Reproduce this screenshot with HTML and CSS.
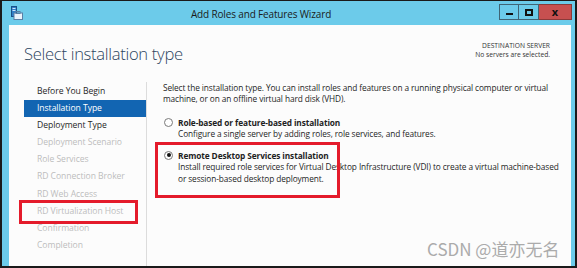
FILE: index.html
```html
<!DOCTYPE html>
<html>
<head>
<meta charset="utf-8">
<link rel="stylesheet" href="styles.css">
</head>
<body>
<div class="screen">
  <div class="window">
    <div class="titlebar">
      <svg class="appicon" width="12" height="14" viewBox="0 0 12 14">
        <rect x="0.5" y="0.5" width="5" height="10" fill="#2f7fc9" stroke="#1b4f86" stroke-width="1"/>
        <rect x="1.5" y="2" width="3" height="1" fill="#cfe6fa"/>
        <rect x="1.5" y="4" width="3" height="1" fill="#cfe6fa"/>
        <rect x="3" y="7" width="8.5" height="6.5" fill="#e8f2fb" stroke="#5a7fa5" stroke-width="1"/>
        <rect x="5" y="5.5" width="4" height="2" fill="none" stroke="#5a7fa5" stroke-width="1"/>
      </svg>
      <div class="title">Add Roles and Features Wizard</div>
      <div class="controls">
        <div class="btn min"><span class="bar"></span></div>
        <div class="btn max"><span class="box"></span></div>
        <div class="btn close">x</div>
      </div>
    </div>
    <div class="content">
      <div class="header">
        <h1 class="heading">Select installation type</h1>
        <div class="dest">
          <div>DESTINATION SERVER</div>
          <div>No servers are selected.</div>
        </div>
      </div>
      <div class="body">
        <ul class="nav">
          <li class="nav-item">Before You Begin</li>
          <li class="nav-item active">Installation Type</li>
          <li class="nav-item">Deployment Type</li>
          <li class="nav-item disabled">Deployment Scenario</li>
          <li class="nav-item disabled">Role Services</li>
          <li class="nav-item disabled">RD Connection Broker</li>
          <li class="nav-item disabled">RD Web Access</li>
          <li class="nav-item disabled">RD Virtualization Host</li>
          <li class="nav-item disabled">Confirmation</li>
          <li class="nav-item disabled">Completion</li>
        </ul>
        <div class="main">
          <p class="intro">Select the installation type. You can install roles and features on a running physical computer or virtual machine, or on an offline virtual hard disk (VHD).</p>
          <div class="option">
            <div class="option-row"><span class="radio"></span><span class="option-title">Role-based or feature-based installation</span></div>
            <div class="option-desc">Configure a single server by adding roles, role services, and features.</div>
          </div>
          <div class="option">
            <div class="option-row"><span class="radio checked"></span><span class="option-title">Remote Desktop Services installation</span></div>
            <div class="option-desc">Install required role services for Virtual Desktop Infrastructure (VDI) to create a virtual machine-based or session-based desktop deployment.</div>
          </div>
        </div>
      </div>
      <div class="mark mark-nav"></div>
      <div class="mark mark-option"></div>
      <div class="watermark">CSDN @道亦无名</div>
    </div>
  </div>
</div>
</body>
</html>
```
FILE: styles.css
```css
* { box-sizing: border-box; }
html, body { margin: 0; padding: 0; background: #111; }
body { width: 577px; height: 268px; overflow: hidden; }

.screen {
  width: 577px;
  height: 268px;
  background: #1a1a1a;
  padding: 1px 2px 2px 2px;
  font-family: "Open Sans", "Noto Sans", sans-serif;
}

.window {
  height: 100%;
  background: #6ccbea;
  display: flex;
  flex-direction: column;
  padding: 0 4px 0 7px;
}

.titlebar {
  height: 24px;
  display: flex;
  align-items: flex-start;
}
.appicon { margin: 5px 0 0 2px; flex: none; }
.title {
  flex: 1;
  margin-top: 6px;
  text-align: center;
  font-size: 10px;
  letter-spacing: -0.15px;
  color: #1b1b1b;
  padding-left: 0;
}
.controls {
  margin-top: 3px;
  margin-right: -1px;
  display: flex;
}
.btn {
  height: 16px;
  border: 1px solid #3f6475;
  display: flex;
  align-items: center;
  justify-content: center;
}
.btn.min { width: 20px; }
.btn.max { width: 20px; border-left: none; }
.btn.close {
  width: 33px;
  background: #c75050;
  border-color: #8a3a3a;
  border-left: none;
  font-weight: 700;
  font-size: 11px;
  color: #111;
  line-height: 1;
  padding-bottom: 2px;
}
.bar { width: 7px; height: 2px; background: #111; margin-top: 4px; }
.box { width: 8px; height: 7px; border: 2px solid #111; }

.content {
  flex: 1;
  background: #fcfcfc;
  position: relative;
  display: flex;
  flex-direction: column;
}

.header {
  display: flex;
  justify-content: space-between;
  align-items: flex-start;
  height: 57px;
}
.heading {
  margin: 17px 0 0 15px;
  font-size: 16.6px;
  font-weight: 300;
  color: #2c4560;
  letter-spacing: -0.3px;
}
.dest {
  margin: 16px 21px 0 0;
  text-align: right;
  font-size: 6.7px;
  line-height: 9px;
  color: #333;
}

.body {
  flex: 1;
  display: flex;
}
.nav {
  list-style: none;
  margin: 0 0 0 15px;
  padding: 1px 0 0 0;
  width: 123px;
  border-right: 1px solid #dcdcdc;
}
.nav-item {
  height: 17.1px;
  line-height: 17px;
  padding-left: 13px;
  font-size: 8.6px;
  letter-spacing: -0.05px;
  color: #262626;
  white-space: nowrap;
}
.nav-item.active { background: #1265b2; color: #fff; }
.nav-item.disabled { color: #bdbdbd; }

.main {
  flex: 1;
  padding: 0 0 0 16px;
  font-size: 8.3px;
  letter-spacing: -0.1px;
  color: #1e1e1e;
}
.intro {
  margin: 0;
  line-height: 11px;
  width: 400px;
}
.option { margin-top: 12px; }
.option + .option { margin-top: 9px; }
.option-row {
  display: flex;
  align-items: center;
  height: 12px;
}
.radio {
  width: 9px; height: 9px;
  border: 1px solid #7a7a7a;
  border-radius: 50%;
  background: #fff;
  margin: 0 5px 0 1px;
  position: relative;
  flex: none;
}
.radio.checked::after {
  content: "";
  position: absolute;
  left: 1.5px; top: 1.5px;
  width: 4px; height: 4px;
  border-radius: 50%;
  background: #111;
}
.option-title { font-weight: 700; }
.option-desc {
  padding-left: 15px;
  line-height: 12px;
  width: 400px;
}

.mark {
  position: absolute;
  border: 3px solid #e41b2b;
}
.mark-nav { left: 10px; top: 175px; width: 119px; height: 24px; }
.mark-option { left: 146px; top: 117px; width: 185px; height: 56px; }

.watermark {
  position: absolute;
  left: 418px;
  top: 211px;
  font-family: "Noto Sans CJK SC", sans-serif;
  font-size: 17px;
  line-height: 25px;
  color: #ababab;
  white-space: nowrap;
}
```
